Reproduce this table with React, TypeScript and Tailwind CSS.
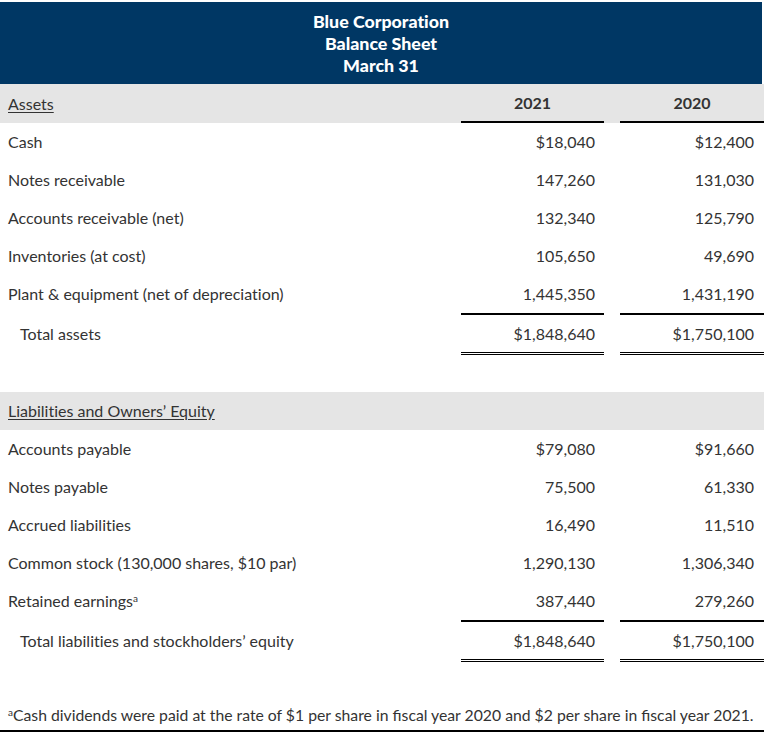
import React from "react";

type Row = { label: string; a: string; b: string; sup?: boolean };

const assets: Row[] = [
  { label: "Cash", a: "$18,040", b: "$12,400" },
  { label: "Notes receivable", a: "147,260", b: "131,030" },
  { label: "Accounts receivable (net)", a: "132,340", b: "125,790" },
  { label: "Inventories (at cost)", a: "105,650", b: "49,690" },
  { label: "Plant & equipment (net of depreciation)", a: "1,445,350", b: "1,431,190" },
];

const liabilities: Row[] = [
  { label: "Accounts payable", a: "$79,080", b: "$91,660" },
  { label: "Notes payable", a: "75,500", b: "61,330" },
  { label: "Accrued liabilities", a: "16,490", b: "11,510" },
  { label: "Common stock (130,000 shares, $10 par)", a: "1,290,130", b: "1,306,340" },
  { label: "Retained earnings", a: "387,440", b: "279,260", sup: true },
];

function DataRow({ r }: { r: Row }) {
  return (
    <div className="grid grid-cols-[445px_143px_144px] gap-x-4 h-[38px] items-center">
      <div className="pl-2">
        {r.label}
        {r.sup && <sup className="text-[10px]">a</sup>}
      </div>
      <div className="text-right pr-[9px]">{r.a}</div>
      <div className="text-right pr-[10px]">{r.b}</div>
    </div>
  );
}

function TotalRow({ label, a, b }: { label: string; a: string; b: string }) {
  return (
    <div className="grid grid-cols-[445px_143px_144px] gap-x-4">
      <div className="pl-5 flex items-center pt-[2px] pb-[3px]">{label}</div>
      <div className="text-right pr-[9px] border-t-2 border-b-[3px] border-b-black border-t-black [border-bottom-style:double] h-[42px] flex items-center justify-end">
        {a}
      </div>
      <div className="text-right pr-[10px] border-t-2 border-b-[3px] border-b-black border-t-black [border-bottom-style:double] h-[42px] flex items-center justify-end">
        {b}
      </div>
    </div>
  );
}

export default function App() {
  return (
    <div
      className="w-[764px] h-[743px] bg-white text-[16px] text-[#333333] pt-[2px] [font-variant-ligatures:none]"
      style={{ fontFamily: "Lato, 'Noto Sans', sans-serif" }}
    >
      <div className="bg-[#003764] mr-[2px] h-[82px] pt-[8px] flex flex-col items-center text-white font-black text-[17.8px] leading-[22px]">
        <div>Blue Corporation</div>
        <div>Balance Sheet</div>
        <div>March 31</div>
      </div>

      <div className="grid grid-cols-[445px_143px_144px] gap-x-4 bg-[#e5e5e5] h-[39px]">
        <div className="pl-2 flex items-center">
          <span className="underline underline-offset-2">Assets</span>
        </div>
        <div className="flex items-center justify-center font-bold border-b-2 border-black">2021</div>
        <div className="flex items-center justify-center font-bold border-b-2 border-black">2020</div>
      </div>

      {assets.map((r) => (
        <DataRow key={r.label} r={r} />
      ))}
      <TotalRow label="Total assets" a="$1,848,640" b="$1,750,100" />

      <div className="h-[37px]" />

      <div className="bg-[#e5e5e5] h-[38px] pl-2 flex items-center">
        <span className="underline underline-offset-2">Liabilities and Owners’ Equity</span>
      </div>

      {liabilities.map((r) => (
        <DataRow key={r.label} r={r} />
      ))}
      <TotalRow label="Total liabilities and stockholders’ equity" a="$1,848,640" b="$1,750,100" />

      <div className="mt-[38px] h-[32px] flex items-center pl-2 border-b-2 border-black">
        <span className="whitespace-nowrap text-[15.75px] [font-variant-ligatures:common-ligatures]">
          <sup className="text-[10px]">a</sup>Cash dividends were paid at the rate of $1 per share in fiscal year 2020 and $2 per share in fiscal year 2021.
        </span>
      </div>
    </div>
  );
}
